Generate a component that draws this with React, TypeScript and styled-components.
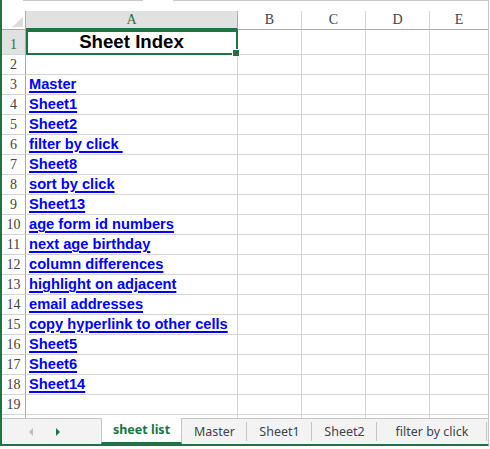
import React from "react";
import styled, { createGlobalStyle } from "styled-components";

const GREEN = "#217346";
const GRID = "#d4d4d4";
const HEAD_LINE = "#ababab";

const Global = createGlobalStyle`
  html, body { margin: 0; padding: 0; background: #fff; }
  * { box-sizing: border-box; }
`;

const Window = styled.div`
  width: 489px;
  height: 446px;
  border-left: 2px solid ${GREEN};
  border-right: 1px solid #c6c6c6;
  border-bottom: 2px solid ${GREEN};
  display: flex;
  flex-direction: column;
  background: #fff;
  overflow: hidden;
`;

const TopStrip = styled.div`
  height: 11px;
  display: flex;
  align-items: flex-start;
  gap: 30px;
  padding-left: 21px;
`;

const StripLine = styled.div<{ $w?: number }>`
  height: 1px;
  background: #c8c8c8;
  ${(p) => (p.$w ? `width: ${p.$w}px;` : "flex: 1;")}
`;

const Sheet = styled.div`
  display: grid;
  grid-template-columns: 24px 212px 64px 64px 64px 58px;
  grid-template-rows: 19px 25px repeat(18, 20px) 3px;
`;

const Corner = styled.div`
  border-right: 1px solid ${HEAD_LINE};
  border-bottom: 1px solid ${HEAD_LINE};
  display: flex;
  justify-content: flex-end;
  align-items: flex-end;
  padding: 0 2px 2px 0;
`;

const ColHead = styled.div<{ $active?: boolean; $last?: boolean }>`
  display: flex;
  align-items: flex-end;
  justify-content: center;
  padding-bottom: ${(p) => (p.$active ? 1 : 2)}px;
  font-family: "Liberation Serif", "DejaVu Serif", serif;
  font-size: 14px;
  line-height: 1;
  color: ${(p) => (p.$active ? GREEN : "#444")};
  background: ${(p) => (p.$active ? "#e1e1e1" : "#fff")};
  border-right: ${(p) => (p.$last ? "none" : `1px solid ${p.$active ? HEAD_LINE : GRID}`)};
  border-bottom: ${(p) => (p.$active ? `2px solid ${GREEN}` : `1px solid ${HEAD_LINE}`)};
`;

const RowHead = styled.div<{ $active?: boolean; $open?: boolean }>`
  display: flex;
  align-items: flex-end;
  justify-content: center;
  padding-bottom: 2px;
  font-family: "Liberation Serif", "DejaVu Serif", serif;
  font-size: 14px;
  line-height: 1;
  color: ${(p) => (p.$active ? GREEN : "#444")};
  background: ${(p) => (p.$active ? "#e1e1e1" : "#fff")};
  border-right: 1px solid ${HEAD_LINE};
  border-bottom: ${(p) => (p.$open ? "none" : `1px solid ${GRID}`)};
`;

const Cell = styled.div<{ $last?: boolean; $open?: boolean }>`
  position: relative;
  display: flex;
  align-items: flex-end;
  padding: 0 0 2px 3px;
  border-right: ${(p) => (p.$last ? "none" : `1px solid ${GRID}`)};
  border-bottom: ${(p) => (p.$open ? "none" : `1px solid ${GRID}`)};
  white-space: pre;
`;

const TitleCell = styled(Cell)`
  z-index: 2;
  justify-content: center;
  padding: 0 0 2px 0;
  font-family: "Liberation Sans", Arial, sans-serif;
  font-weight: bold;
  font-size: 18.67px;
  line-height: 1;
  color: #000;
`;

const Selection = styled.div`
  position: absolute;
  left: 0;
  top: 0;
  right: -1px;
  bottom: -1px;
  border: 2px solid ${GREEN};
  pointer-events: none;
`;

const FillHandle = styled.div`
  position: absolute;
  right: -3px;
  bottom: -3px;
  width: 8px;
  height: 8px;
  background: ${GREEN};
  border: 1px solid #fff;
`;

const SheetLink = styled.a`
  font-family: "Liberation Sans", Arial, sans-serif;
  font-weight: bold;
  font-size: 14.67px;
  line-height: 1;
  color: #0000ff;
  text-decoration: underline;
  text-decoration-thickness: 2px;
  text-underline-offset: 2px;
  white-space: pre;
`;

const TabBar = styled.div`
  height: 26px;
  display: flex;
  background: #f3f3f3;
  border-top: 1px solid #c6c6c6;
`;

const Nav = styled.div`
  width: 99px;
  display: flex;
  align-items: center;
  padding: 1px 0 0 27px;
  gap: 22px;
`;

const Tab = styled.div<{ $active?: boolean; $w: number }>`
  position: relative;
  width: ${(p) => p.$w}px;
  display: flex;
  align-items: center;
  justify-content: center;
  font-family: "Noto Sans", "Open Sans", sans-serif;
  font-size: 12.5px;
  padding-bottom: 1px;
  color: ${(p) => (p.$active ? GREEN : "#444")};
  font-weight: ${(p) => (p.$active ? 700 : 400)};
  ${(p) =>
    p.$active
      ? `
    background: #fff;
    margin-top: -1px;
    border-left: 1px solid #c6c6c6;
    border-right: 1px solid #c6c6c6;
    border-bottom: 2px solid ${GREEN};
  `
      : `
    &::after {
      content: "";
      position: absolute;
      right: 0;
      top: 3px;
      bottom: 3px;
      width: 1px;
      background: #c6c6c6;
    }
  `}
`;

const links = [
  "Master",
  "Sheet1",
  "Sheet2",
  "filter by click ",
  "Sheet8",
  "sort by click",
  "Sheet13",
  "age form id numbers",
  "next age birthday",
  "column differences",
  "highlight on adjacent",
  "email addresses",
  "copy hyperlink to other cells",
  "Sheet5",
  "Sheet6",
  "Sheet14",
];

const cols = ["A", "B", "C", "D", "E"];

const rows: (string | null)[] = [null, null, ...links, null];

const tabs = [
  { name: "sheet list", w: 81, active: true },
  { name: "Master", w: 65 },
  { name: "Sheet1", w: 65 },
  { name: "Sheet2", w: 65 },
  { name: "filter by click", w: 110 },
];

function Arrow({ dir, color }: { dir: "left" | "right"; color: string }) {
  return (
    <svg width="5" height="8" viewBox="0 0 5 8">
      {dir === "left" ? (
        <polygon points="4,0 4,8 0,4" fill={color} />
      ) : (
        <polygon points="0,0 0,8 4,4" fill={color} />
      )}
    </svg>
  );
}

export default function App() {
  return (
    <>
      <Global />
      <Window>
        <TopStrip>
          <StripLine $w={120} />
          <StripLine />
        </TopStrip>
        <Sheet>
          <Corner>
            <svg width="11" height="10" viewBox="0 0 11 10">
              <polygon points="11,0 11,10 0,10" fill="#dcdcdc" />
            </svg>
          </Corner>
          {cols.map((c, i) => (
            <ColHead key={c} $active={i === 0} $last={i === cols.length - 1}>
              {c}
            </ColHead>
          ))}

          {rows.map((text, r) => {
            const n = r + 1;
            return (
              <React.Fragment key={n}>
                <RowHead $active={n === 1}>{n}</RowHead>
                {n === 1 ? (
                  <TitleCell>
                    Sheet Index
                    <Selection />
                    <FillHandle />
                  </TitleCell>
                ) : (
                  <Cell>{text && <SheetLink href="#">{text}</SheetLink>}</Cell>
                )}
                {cols.slice(1).map((c, i) => (
                  <Cell key={c} $last={i === cols.length - 2} />
                ))}
              </React.Fragment>
            );
          })}

          <RowHead $open />
          {cols.map((c, i) => (
            <Cell key={c} $open $last={i === cols.length - 1} />
          ))}
        </Sheet>
        <TabBar>
          <Nav>
            <Arrow dir="left" color="#bdbdbd" />
            <Arrow dir="right" color={GREEN} />
          </Nav>
          {tabs.map((t) => (
            <Tab key={t.name} $active={t.active} $w={t.w}>
              {t.name}
            </Tab>
          ))}
        </TabBar>
      </Window>
    </>
  );
}
